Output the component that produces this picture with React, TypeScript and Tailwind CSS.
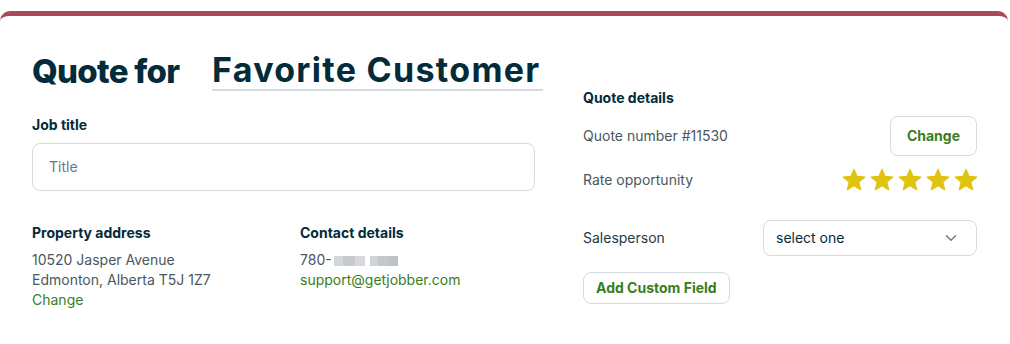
import { ChevronDown } from 'lucide-react';

const navy = 'text-[#032b3a]';
const body = 'text-[#4a5761]';
const green = 'text-[#3a7d1c]';

function StarIcon(): JSX.Element {
    return (
        <svg viewBox="0 0 24 24" className="h-[26px] w-[26px]" fill="#dfc30e">
            <path d="M12 17.27L18.18 21l-1.64-7.03L22 9.24l-7.19-.61L12 2 9.19 8.63 2 9.24l5.46 4.73L5.82 21z" strokeLinejoin="round" stroke="#dfc30e" strokeWidth="1" />
        </svg>
    );
}

function BlurredNumber(): JSX.Element {
    return (
        <span className="ml-[2px] inline-flex items-center gap-[5px] align-middle">
            <span className="flex h-[10px]">
                <span className="w-[9px] bg-[#d3d6d9]" />
                <span className="w-[12px] bg-[#c7cacd]" />
                <span className="w-[10px] bg-[#d6d8db]" />
            </span>
            <span className="flex h-[10px]">
                <span className="w-[8px] bg-[#d1d4d7]" />
                <span className="w-[10px] bg-[#c5c8cb]" />
                <span className="w-[10px] bg-[#bfc2c6]" />
            </span>
        </span>
    );
}

export default function App(): JSX.Element {
    return (
        <div className="h-[344px] w-[1010px] bg-white pt-[11px] font-['Inter',sans-serif]">
            <div className="mr-[2px] h-[333px] rounded-t-[10px] border-t-[5px] border-[#a94a5b] bg-white px-8 pt-[35px]">
                <div className="flex gap-12">
                    <div className="w-[503px] shrink-0">
                        <h1 className={`flex items-end whitespace-nowrap text-[34px] leading-[40px] ${navy}`}>
                            <span className="w-[146px] shrink-0 text-[33px] font-extrabold tracking-[-0.7px]">Quote for</span>
                            <span className="ml-[34px] w-[331px] shrink-0 border-b-2 border-[#d5dbdf] font-bold leading-[38px] tracking-[1.3px]">Favorite Customer</span>
                        </h1>
                        <p className={`mt-[24px] text-sm font-bold leading-5 ${navy}`}>Job title</p>
                        <div className="mt-2 flex h-12 items-center rounded-lg border border-[#d5dbdf] px-4 text-sm text-[#65778a]">Title</div>
                        <div className="mt-8 grid grid-cols-[268px_1fr] text-sm leading-5">
                            <div>
                                <p className={`font-bold ${navy}`}>Property address</p>
                                <p className={`mt-[7px] ${body}`}>10520 Jasper Avenue</p>
                                <p className={body}>Edmonton, Alberta T5J 1Z7</p>
                                <p className={green}>Change</p>
                            </div>
                            <div>
                                <p className={`font-bold ${navy}`}>Contact details</p>
                                <p className={`mt-[7px] ${body}`}>780-<BlurredNumber /></p>
                                <p className={green}>support@getjobber.com</p>
                            </div>
                        </div>
                    </div>
                    <div className="w-[394px] shrink-0 pt-[37px] text-sm leading-5">
                        <p className={`font-bold ${navy}`}>Quote details</p>
                        <div className="mt-2 flex items-center justify-between">
                            <span className={body}>Quote number #11530</span>
                            <button className={`h-10 rounded-lg border border-[#d5dbdf] px-4 font-bold ${green}`}>Change</button>
                        </div>
                        <div className="mt-3 flex h-6 items-center justify-between">
                            <span className={body}>Rate opportunity</span>
                            <div className="-mr-[2px] flex gap-[2px]">
                                {[0, 1, 2, 3, 4].map((i) => <StarIcon key={i} />)}
                            </div>
                        </div>
                        <div className="mt-[28px] flex items-center justify-between">
                            <span className="text-[#1f3a47]">Salesperson</span>
                            <div className={`flex h-9 w-[214px] items-center justify-between rounded-lg border border-[#d5dbdf] pl-3 pr-4 ${navy}`}>
                                <span>select one</span>
                                <ChevronDown className="h-[18px] w-[18px] text-[#6b7c88]" strokeWidth={2} />
                            </div>
                        </div>
                        <button className={`mt-4 h-8 rounded-lg border border-[#d5dbdf] px-3 font-bold ${green}`}>Add Custom Field</button>
                    </div>
                </div>
            </div>
        </div>
    );
}
